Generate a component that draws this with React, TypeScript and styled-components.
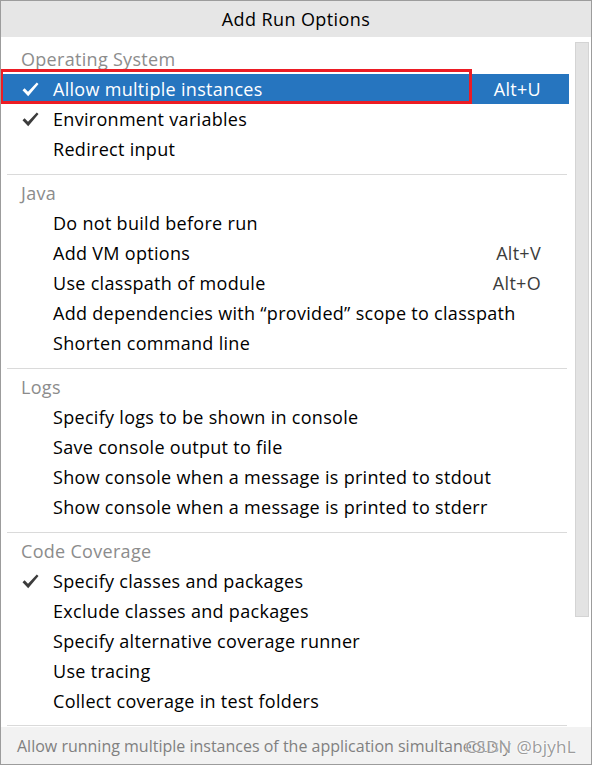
import styled, { createGlobalStyle } from "styled-components";

const GlobalStyle = createGlobalStyle`
  html, body {
    margin: 0;
    padding: 0;
    background: #ffffff;
  }
  body {
    font-family: "Open Sans", "Noto Sans", "Liberation Sans", sans-serif;
  }
`;

const Window = styled.div`
  position: relative;
  width: 592px;
  height: 765px;
  box-sizing: border-box;
  border: 1px solid #9c9c9c;
  display: flex;
  flex-direction: column;
  background: #ffffff;
  overflow: hidden;
`;

const TitleBar = styled.div`
  height: 36px;
  flex: none;
  background: #e6e6e6;
  display: flex;
  align-items: center;
  justify-content: center;
  font-size: 18px;
  letter-spacing: 0.4px;
  color: #000;
`;

const Body = styled.div`
  flex: 1;
  display: flex;
  min-height: 0;
  overflow: hidden;
`;

const List = styled.div`
  width: 568px;
  padding: 7px 0 0 2px;
  box-sizing: border-box;
  display: flex;
  flex-direction: column;
`;

const SectionHeader = styled.div`
  height: 30px;
  display: flex;
  align-items: center;
  padding-left: 18px;
  font-size: 18px;
  letter-spacing: 0.3px;
  color: #8c8c8c;
`;

const Row = styled.div<{ $selected?: boolean }>`
  position: relative;
  height: 30px;
  display: flex;
  align-items: center;
  font-size: 18px;
  letter-spacing: 0.3px;
  background: ${(p) => (p.$selected ? "#2675bf" : "transparent")};
  color: ${(p) => (p.$selected ? "#ffffff" : "#000000")};
`;

const CheckSlot = styled.span`
  width: 50px;
  flex: none;
  display: flex;
  justify-content: flex-start;
  padding-left: 19px;
  box-sizing: border-box;
`;

const Label = styled.span`
  flex: 1;
  white-space: nowrap;
`;

const Shortcut = styled.span<{ $selected?: boolean }>`
  padding-right: 28px;
  color: ${(p) => (p.$selected ? "#ffffff" : "#3c3c3c")};
`;

const Separator = styled.div`
  height: 1px;
  background: #dadada;
  margin: 10px 2px 3px 4px;
`;

const BottomSeparator = styled(Separator)`
  margin: 9px 2px 0 4px;
`;

const Annotation = styled.div`
  position: absolute;
  left: -3px;
  top: -5px;
  width: 472px;
  height: 35px;
  box-sizing: border-box;
  border: 3px solid #ec1c24;
  pointer-events: none;
`;

const ScrollColumn = styled.div`
  flex: 1;
  padding: 5px 0 0 6px;
`;

const Thumb = styled.div`
  width: 14px;
  height: 575px;
  box-sizing: border-box;
  background: #e3e3e3;
  border: 1px solid #d4d4d4;
`;

const Footer = styled.div`
  position: relative;
  flex: none;
  height: 37px;
  background: #f2f2f2;
  display: flex;
  align-items: center;
  padding-left: 16px;
  font-size: 16px;
  color: #808080;
  white-space: nowrap;
`;

const Watermark = styled.span`
  position: absolute;
  right: 15px;
  top: 50%;
  transform: translateY(-50%);
  font-size: 17px;
  letter-spacing: 0.3px;
  color: rgba(130, 130, 130, 0.8);
  text-shadow: 0 0 2px #ffffff, 0 0 2px #ffffff;
`;

function Check({ color }: { color: string }) {
  return (
    <svg width="17" height="15" viewBox="0 0 17 15">
      <path
        d="M0.5 8.2 L2.6 6.3 L6 9.8 L14.8 0.6 L16.5 2.1 L6.2 14.3 Z"
        fill={color}
      />
    </svg>
  );
}

type Item = { label: string; checked?: boolean; shortcut?: string; selected?: boolean };
type Section = { title: string; items: Item[] };

const sections: Section[] = [
  {
    title: "Operating System",
    items: [
      { label: "Allow multiple instances", checked: true, shortcut: "Alt+U", selected: true },
      { label: "Environment variables", checked: true },
      { label: "Redirect input" },
    ],
  },
  {
    title: "Java",
    items: [
      { label: "Do not build before run" },
      { label: "Add VM options", shortcut: "Alt+V" },
      { label: "Use classpath of module", shortcut: "Alt+O" },
      { label: "Add dependencies with \u201cprovided\u201d scope to classpath" },
      { label: "Shorten command line" },
    ],
  },
  {
    title: "Logs",
    items: [
      { label: "Specify logs to be shown in console" },
      { label: "Save console output to file" },
      { label: "Show console when a message is printed to stdout" },
      { label: "Show console when a message is printed to stderr" },
    ],
  },
  {
    title: "Code Coverage",
    items: [
      { label: "Specify classes and packages", checked: true },
      { label: "Exclude classes and packages" },
      { label: "Specify alternative coverage runner" },
      { label: "Use tracing" },
      { label: "Collect coverage in test folders" },
    ],
  },
];

export default function App() {
  return (
    <>
      <GlobalStyle />
      <Window>
        <TitleBar>Add Run Options</TitleBar>
        <Body>
          <List>
            {sections.map((section, si) => (
              <div key={section.title}>
                {si > 0 && <Separator />}
                <SectionHeader>{section.title}</SectionHeader>
                {section.items.map((item) => (
                  <Row key={item.label} $selected={item.selected}>
                    <CheckSlot>
                      {item.checked && (
                        <Check color={item.selected ? "#ffffff" : "#3c3c3c"} />
                      )}
                    </CheckSlot>
                    <Label>{item.label}</Label>
                    {item.shortcut && (
                      <Shortcut $selected={item.selected}>{item.shortcut}</Shortcut>
                    )}
                    {item.selected && <Annotation />}
                  </Row>
                ))}
              </div>
            ))}
            <BottomSeparator />
          </List>
          <ScrollColumn>
            <Thumb />
          </ScrollColumn>
        </Body>
        <Footer>
          Allow running multiple instances of the application simultaneously
          <Watermark>CSDN @bjyhL</Watermark>
        </Footer>
      </Window>
    </>
  );
}
